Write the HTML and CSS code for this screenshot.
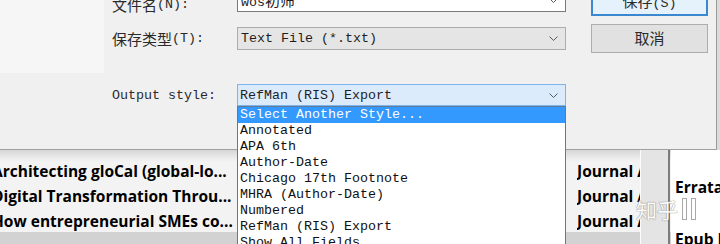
FILE: index.html
```html
<!DOCTYPE html>
<html lang="zh">
<head>
  <meta charset="UTF-8" />
  <title>保存 - Output style</title>
  <link rel="stylesheet" href="styles.css">
</head>
<body>
  <div class="dialog">
    <div class="side"></div>

    <div class="form">
      <div class="row row-name">
        <label class="label"><span class="cjk">文件名</span>(N):</label>
        <div class="field input">
          <span>wos<span class="cjk">初筛</span></span>
          <svg class="chev" width="9" height="5" viewBox="0 0 9 5"><polyline points="0.5,0.5 4.5,4.5 8.5,0.5"/></svg>
        </div>
      </div>

      <div class="row row-type">
        <label class="label"><span class="cjk">保存类型</span>(T):</label>
        <div class="field select">
          <span>Text File (*.txt)</span>
          <svg class="chev" width="9" height="5" viewBox="0 0 9 5"><polyline points="0.5,0.5 4.5,4.5 8.5,0.5"/></svg>
        </div>
      </div>

      <div class="row row-style">
        <label class="label">Output style:</label>
        <div class="field select open">
          <span>RefMan (RIS) Export</span>
          <svg class="chev" width="9" height="5" viewBox="0 0 9 5"><polyline points="0.5,0.5 4.5,4.5 8.5,0.5"/></svg>

          <ul class="dropdown">
            <li class="selected">Select Another Style...</li>
            <li>Annotated</li>
            <li>APA 6th</li>
            <li>Author-Date</li>
            <li>Chicago 17th Footnote</li>
            <li>MHRA (Author-Date)</li>
            <li>Numbered</li>
            <li>RefMan (RIS) Export</li>
            <li>Show All Fields</li>
          </ul>
        </div>
      </div>
    </div>

    <div class="buttons">
      <button class="btn default"><span class="cjk">保存</span>(S)</button>
      <button class="btn"><span class="cjk">取消</span></button>
    </div>
  </div>

  <div class="app">
    <div class="refs">
      <div class="ref-rows">
        <div class="ref">
          <div class="title">Architecting gloCal (global-lo...</div>
          <div class="journal">Journal Article</div>
        </div>
        <div class="ref">
          <div class="title">Digital Transformation Throu...</div>
          <div class="journal">Journal Article</div>
        </div>
        <div class="ref">
          <div class="title">How entrepreneurial SMEs co...</div>
          <div class="journal">Journal Article</div>
        </div>
      </div>
      <div class="strip"></div>
      <div class="splitter"></div>
    </div>
    <div class="detail">
      <div class="detail-item first">Errata</div>
      <div class="detail-item">Epub Date</div>
    </div>

    <div class="watermark"><span>知乎</span><i></i><i></i></div>
  </div>
</body>
</html>
```

FILE: styles.css
```css
body {
  margin: 0;
  width: 720px;
  height: 244px;
  overflow: hidden;
  background: #dcdcdc;
  font-family: "Liberation Mono", "Noto Sans CJK SC", monospace;
  font-size: 13.33px;
  color: #1e1e1e;
}
.cjk {
  font-family: "Noto Sans CJK SC", sans-serif;
  font-size: 15px;
  line-height: 1;
}

/* dialog */
.dialog {
  display: flex;
  align-items: flex-start;
  width: 716px;
  height: 149px;
  background: #f0f0f0;
  border-right: 1px solid #9a9a9a;
  border-bottom: 1px solid #a0a0a0;
  position: relative;
  z-index: 2;
}
.side {
  width: 104px;
  height: 73px;
  background: #f6f6f6;
  flex: none;
}
.form {
  margin-left: 8px;
  margin-top: -11px;
  display: flex;
  flex-direction: column;
}
.row {
  display: flex;
  align-items: center;
}
.row-type { margin-top: 15px; }
.row-style { margin-top: 34px; }
.label {
  width: 125px;
  flex: none;
  color: #2a2a2a;
  display: flex;
  align-items: center;
}
.row-name .label { padding-top: 7px; }

.field {
  width: 329px;
  height: 23px;
  box-sizing: border-box;
  display: flex;
  align-items: center;
  justify-content: space-between;
  padding: 0 7px 0 3px;
  position: relative;
}
.input {
  background: #fff;
  border: 1px solid #7a7a7a;
}
.select {
  background: #e5e5e5;
  border: 1px solid #acacac;
}
.select.open {
  height: 22px;
  padding-left: 2px;
  background: #dcebfc;
  border-color: #7eb4ea;
}
.chev {
  fill: none;
  stroke: #5a5a5a;
  stroke-width: 1;
}

.dropdown {
  position: absolute;
  left: -1px;
  top: 21px;
  width: 329px;
  height: 140px;
  box-sizing: border-box;
  margin: 0;
  padding: 0;
  overflow: hidden;
  list-style: none;
  background: #fff;
  border: 1px solid #5f7a99;
  border-bottom: none;
  z-index: 5;
}
.dropdown li {
  height: 16px;
  line-height: 16px;
  padding-left: 2px;
  white-space: nowrap;
  color: #111;
}
.dropdown li.selected {
  background: #3399ff;
  color: #fff;
}

.buttons {
  margin-left: 25px;
  margin-top: -13px;
  width: 117px;
  display: flex;
  flex-direction: column;
  gap: 8px;
}
.btn {
  height: 29px;
  font-family: inherit;
  font-size: 13.33px;
  color: #2a2a2a;
  background: #e1e1e1;
  border: 1px solid #adadad;
  padding: 0;
}
.btn.default {
  border: 2px solid #3c88d0;
  background: #e5f1fb;
}

/* application behind the dialog */
.app {
  position: relative;
  display: flex;
  height: 94px;
}
.refs {
  display: flex;
  width: 671px;
  background: linear-gradient(#d6d6d6 0, #ececec 8px, #f3f3f3 12px, #f3f3f3 82px, #d2d2d2 82px);
}
.ref-rows {
  width: 640px;
  padding-top: 8px;
}
.ref {
  display: flex;
  height: 25px;
  align-items: center;
  font-family: "Open Sans", "Noto Sans", sans-serif;
  font-weight: 700;
  font-size: 15.5px;
  color: #000;
}
.title {
  width: 585px;
  margin-left: -8px;
  white-space: nowrap;
}
.journal {
  width: 63px;
  overflow: hidden;
  white-space: nowrap;
}
.strip {
  width: 27px;
  background: #e4e4e4;
  border-left: 1px solid #fbfbfb;
}
.splitter {
  width: 2px;
  background: #7c7c7c;
}
.detail {
  flex: 1;
  background: #fff;
  padding-left: 4px;
  font-family: "Open Sans", "Noto Sans", sans-serif;
  font-weight: 700;
  font-size: 15.5px;
  color: #000;
  white-space: nowrap;
  overflow: hidden;
}
.detail-item { height: 25px; line-height: 25px; }
.detail-item.first { margin-top: 25px; margin-bottom: 27px; }

.watermark {
  position: absolute;
  left: 636px;
  top: 48px;
  display: flex;
  align-items: center;
  gap: 4px;
  opacity: 0.85;
}
.watermark span {
  font-family: "Noto Sans CJK SC", sans-serif;
  font-size: 21px;
  line-height: 1;
  color: #fff;
  text-shadow: 0 0 1px #777, 0 0 1px #777;
}
.watermark i {
  display: block;
  width: 3px;
  height: 20px;
  background: #fff;
  border: 1px solid #999;
}
```
